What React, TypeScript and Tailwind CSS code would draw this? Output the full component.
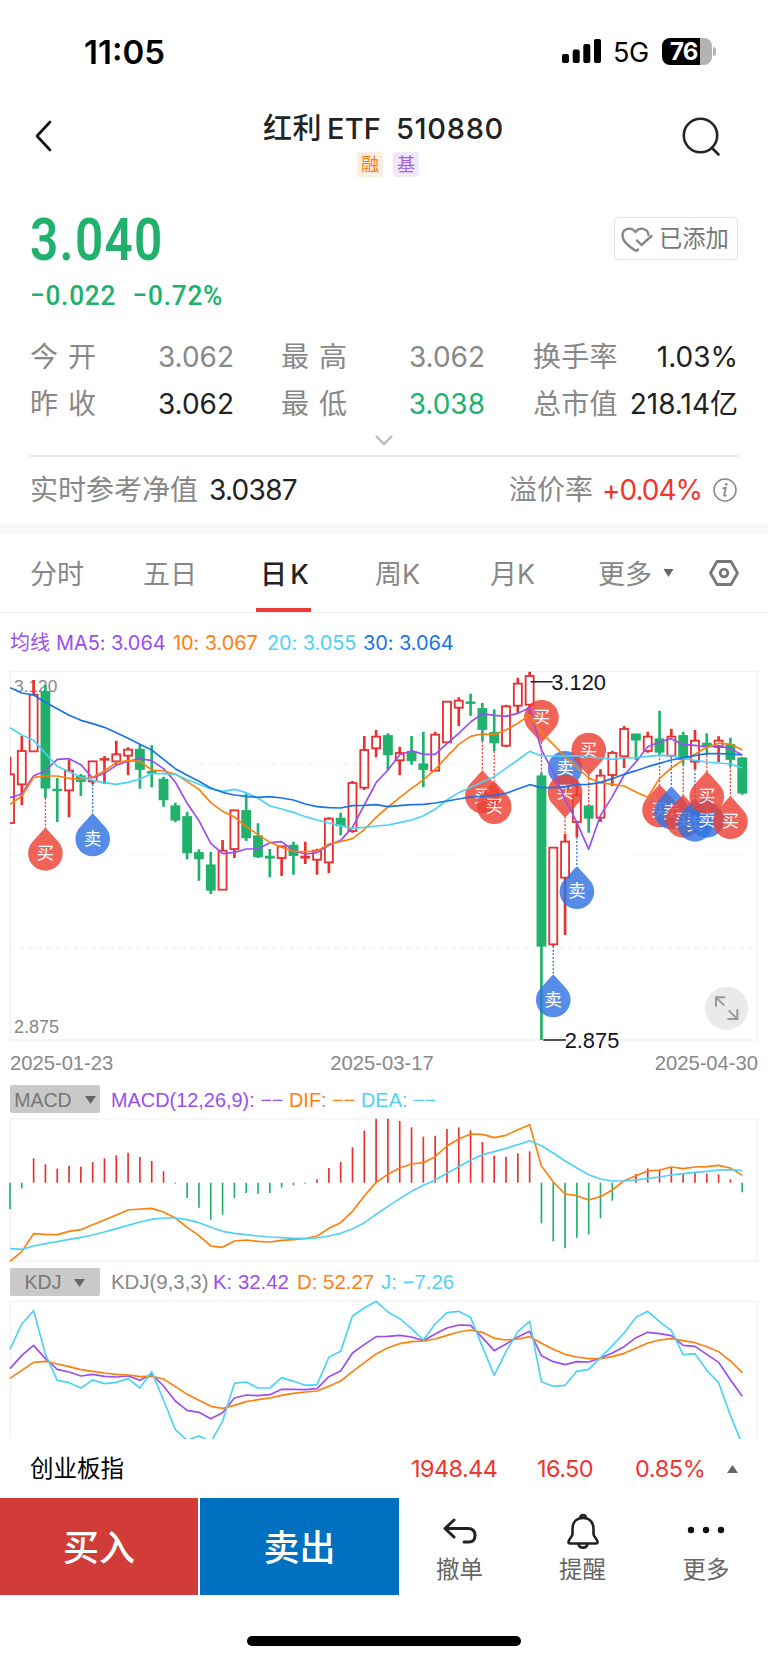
import React from "react";

type Candle = [dir: "r" | "g", high: number, top: number, bottom: number, low: number];
type Marker = { i: number; cy: number; kind: "buy" | "sell"; tip: "up" | "down"; from?: number };

const UP = "#e93030";
const DOWN = "#20b26c";
const PURPLE = "#9b4df0";
const ORANGE = "#ff7f0e";
const CYAN = "#4dd2f7";
const BLUE = "#1a73e8";

const START = 30;
const STEP = 35.43;
const xAt = (i: number) => START + STEP * i;

const candles: Candle[] = [
  ["r", 290, 342, 490, 490], ["r", 228, 272, 374, 436], ["r", 60, 103, 275, 275], ["g", 75, 95, 384, 414],
  ["g", 354, 388, 392, 486], ["r", 300, 331, 392, 472], ["g", 342, 348, 364, 408], ["r", 303, 303, 365, 372],
  ["r", 288, 296, 300, 372], ["r", 242, 282, 305, 315], ["r", 262, 268, 288, 346], ["g", 255, 268, 328, 386],
  ["g", 256, 335, 339, 382], ["g", 350, 358, 419, 440], ["g", 428, 438, 480, 486], ["g", 455, 470, 578, 598],
  ["g", 568, 578, 596, 662], ["g", 576, 615, 690, 702], ["r", 540, 571, 690, 690], ["r", 450, 450, 568, 594],
  ["g", 400, 452, 533, 543], ["g", 490, 528, 590, 594], ["g", 567, 589, 594, 652], ["r", 558, 558, 595, 648],
  ["g", 545, 556, 586, 644], ["r", 545, 589, 594, 612], ["r", 566, 571, 600, 644], ["r", 472, 475, 608, 640],
  ["g", 458, 475, 497, 526], ["r", 363, 368, 514, 518], ["r", 228, 269, 384, 390], ["r", 210, 229, 266, 292],
  ["g", 220, 227, 284, 330], ["r", 260, 278, 302, 346], ["g", 228, 276, 302, 314], ["g", 215, 312, 328, 382],
  ["r", 215, 223, 333, 333], ["r", 124, 124, 248, 248], ["r", 112, 121, 144, 198], ["g", 101, 126, 130, 167],
  ["g", 129, 146, 208, 243], ["g", 148, 218, 248, 273], ["r", 134, 138, 258, 262], ["r", 53, 70, 138, 160],
  ["r", 35, 47, 135, 175], ["g", 338, 348, 858, 1140], ["r", 562, 562, 854, 858], ["r", 522, 544, 654, 825],
  ["r", 360, 405, 487, 532], ["g", 438, 438, 474, 518], ["r", 328, 346, 474, 486], ["r", 272, 278, 346, 378],
  ["r", 198, 206, 290, 324], ["g", 222, 222, 240, 300], ["r", 215, 229, 274, 278], ["g", 152, 237, 276, 284],
  ["r", 206, 229, 288, 292], ["g", 215, 227, 298, 314], ["r", 210, 241, 306, 328], ["g", 220, 250, 256, 286],
  ["r", 229, 241, 262, 306], ["g", 233, 254, 298, 320], ["g", 292, 294, 399, 404],
];

const ma5 = [413, 402, 347, 333, 298, 296, 314, 354, 340, 316, 304, 296, 302, 326, 366, 430, 482, 550, 581, 577, 567, 567, 548, 545, 572, 582, 578, 556, 541, 502, 435, 368, 330, 284, 272, 283, 283, 251, 220, 186, 161, 166, 169, 160, 143, 270, 335, 418, 487, 568, 466, 410, 345, 306, 260, 246, 236, 254, 256, 261, 257, 266, 285];
const ma10 = [433, 408, 352, 348, 348, 355, 358, 352, 333, 308, 302, 304, 330, 333, 342, 365, 388, 428, 454, 471, 500, 524, 547, 562, 574, 575, 573, 552, 545, 536, 509, 472, 441, 413, 385, 360, 328, 290, 253, 229, 222, 224, 210, 190, 165, 218, 253, 290, 322, 354, 368, 373, 378, 396, 412, 355, 324, 300, 283, 262, 250, 252, 270];
const ma20 = [203, 225, 241, 280, 319, 335, 351, 361, 368, 373, 367, 357, 341, 341, 343, 359, 373, 387, 394, 388, 398, 414, 438, 447, 457, 470, 480, 489, 497, 505, 502, 498, 495, 488, 480, 467, 448, 420, 398, 382, 366, 350, 325, 300, 274, 288, 288, 288, 287, 291, 294, 298, 294, 293, 289, 286, 287, 295, 301, 306, 309, 312, 324];
const ma30 = [83, 99, 105, 127, 146, 166, 181, 191, 202, 218, 235, 253, 270, 298, 326, 346, 364, 384, 397, 405, 409, 412, 410, 414, 420, 432, 440, 443, 444, 437, 436, 434, 440, 437, 434, 433, 429, 423, 417, 411, 410, 406, 400, 387, 374, 383, 383, 380, 374, 373, 367, 356, 343, 332, 320, 310, 300, 293, 287, 281, 281, 282, 285];

const markers: Marker[] = [
  { i: 3, cy: 580, kind: "buy", tip: "up", from: 414 },
  { i: 7, cy: 537, kind: "sell", tip: "up", from: 372 },
  { i: 40, cy: 408, kind: "buy", tip: "up", from: 243 },
  { i: 41, cy: 440, kind: "buy", tip: "up", from: 273 },
  { i: 45, cy: 172, kind: "buy", tip: "down", from: 338 },
  { i: 46, cy: 1020, kind: "sell", tip: "up", from: 858 },
  { i: 47, cy: 325, kind: "sell", tip: "down" },
  { i: 47, cy: 396, kind: "buy", tip: "down", from: 522 },
  { i: 48, cy: 695, kind: "sell", tip: "up", from: 532 },
  { i: 49, cy: 270, kind: "buy", tip: "down", from: 438 },
  { i: 55, cy: 450, kind: "buy", tip: "up", from: 284 },
  { i: 56, cy: 456, kind: "sell", tip: "up", from: 292 },
  { i: 57, cy: 481, kind: "buy", tip: "up", from: 314 },
  { i: 58, cy: 493, kind: "sell", tip: "up", from: 328 },
  { i: 59, cy: 481, kind: "sell", tip: "up" },
  { i: 59, cy: 410, kind: "buy", tip: "up", from: 286 },
  { i: 61, cy: 485, kind: "buy", tip: "up", from: 320 },
];

const MACD_ZERO = 428;
const macdBars = [508, 445, 355, 373, 386, 377, 380, 366, 355, 346, 338, 351, 363, 394, 431, 474, 503, 539, 524, 474, 459, 461, 459, 443, 436, 431, 418, 384, 366, 322, 272, 236, 236, 243, 262, 290, 287, 267, 262, 271, 306, 347, 350, 340, 334, 550, 604, 625, 593, 583, 535, 482, 428, 402, 385, 390, 383, 402, 397, 401, 403, 418, 457];
const dif = [664, 635, 581, 583, 584, 574, 569, 554, 540, 525, 510, 507, 505, 516, 534, 562, 587, 618, 622, 603, 600, 604, 606, 601, 599, 596, 588, 565, 548, 514, 468, 427, 403, 384, 372, 368, 350, 318, 297, 282, 283, 293, 286, 269, 254, 378, 426, 462, 467, 480, 470, 450, 422, 407, 393, 390, 381, 386, 381, 380, 376, 384, 406];
const dea = [626, 628, 618, 611, 605, 598, 592, 585, 576, 566, 556, 546, 538, 534, 534, 539, 548, 562, 574, 580, 584, 588, 591, 593, 595, 595, 594, 588, 580, 567, 548, 523, 499, 476, 454, 436, 420, 400, 380, 360, 344, 335, 325, 314, 302, 317, 339, 363, 384, 404, 417, 423, 423, 420, 415, 411, 405, 401, 397, 394, 390, 389, 392];

const kLine = [326, 286, 256, 296, 328, 336, 348, 343, 349, 351, 348, 361, 343, 378, 423, 451, 457, 476, 458, 414, 405, 407, 404, 388, 388, 389, 386, 350, 333, 279, 254, 230, 229, 226, 231, 242, 222, 204, 195, 196, 233, 272, 252, 231, 214, 287, 305, 314, 305, 306, 294, 279, 260, 233, 217, 221, 227, 256, 259, 283, 307, 359, 409];
const dLine = [355, 331, 307, 304, 312, 320, 329, 334, 339, 343, 345, 350, 349, 357, 380, 403, 421, 439, 445, 436, 425, 419, 414, 406, 400, 396, 393, 379, 363, 335, 308, 282, 263, 251, 245, 243, 237, 226, 216, 210, 217, 235, 240, 237, 230, 250, 268, 283, 291, 296, 296, 290, 280, 265, 249, 240, 236, 242, 248, 260, 275, 303, 338];
const jLine = [268, 192, 152, 283, 361, 368, 384, 360, 371, 367, 356, 384, 335, 420, 509, 541, 528, 546, 484, 370, 366, 384, 384, 353, 364, 376, 374, 292, 274, 168, 144, 124, 156, 176, 206, 240, 192, 158, 154, 172, 260, 346, 275, 215, 184, 365, 379, 376, 334, 328, 293, 257, 219, 172, 154, 185, 212, 284, 281, 331, 368, 466, 553];

function Line({ data, color }: { data: number[]; color: string }) {
  return (
    <polyline
      points={data.map((y, i) => `${xAt(i).toFixed(1)},${y}`).join(" ")}
      fill="none"
      stroke={color}
      strokeWidth={5}
      strokeLinejoin="round"
    />
  );
}

function CandleShape({ c, i }: { c: Candle; i: number }) {
  const [dir, high, top, bottom, low] = c;
  const x = xAt(i);
  const color = dir === "r" ? UP : DOWN;
  return (
    <g stroke={color} fill={dir === "r" ? "none" : color}>
      <path d={`M${x} ${high}V${top}M${x} ${bottom}V${low}`} strokeWidth={8} />
      <rect x={x - 12} y={top + 1} width={24} height={Math.max(bottom - top - 2, 2)} strokeWidth={5.5} />
    </g>
  );
}

function MarkerLead({ m }: { m: Marker }) {
  if (m.from === undefined) return null;
  const x = xAt(m.i);
  const y = m.tip === "up" ? m.cy - 74 : m.cy + 74;
  return (
    <path
      d={`M${x} ${Math.min(y, m.from)}V${Math.max(y, m.from)}`}
      stroke={m.kind === "buy" ? "#ed4134" : "#3274e2"}
      strokeWidth={4}
      strokeDasharray="6 5"
    />
  );
}

function MarkerDrop({ m }: { m: Marker }) {
  return (
    <g transform={`translate(${xAt(m.i)} ${m.cy})`} opacity={0.82}>
      <path
        transform={m.tip === "down" ? "rotate(180)" : undefined}
        d="M-36.8 -36.8L-5 -72Q0 -78 5 -72L36.8 -36.8A52 52 0 1 1 -36.8 -36.8Z"
        fill={m.kind === "buy" ? "#ed4134" : "#3274e2"}
      />
      <text y={17} textAnchor="middle" fontSize={52} fill="#fff">
        {m.kind === "buy" ? "买" : "卖"}
      </text>
    </g>
  );
}

function KChart() {
  return (
    <svg
      viewBox="0 0 2304 1164"
      className="block h-[388px] w-[768px] shrink-0 overflow-visible font-['Liberation_Sans','Noto_Sans_CJK_SC',sans-serif]"
    >
      <defs>
        <clipPath id="plot">
          <rect x={30} y={0} width={2243} height={1144} />
        </clipPath>
      </defs>
      <rect x={31} y={35} width={2241} height={1105} fill="none" stroke="#f2f2f2" strokeWidth={4} />
      {[311, 587, 864].map((y) => (
        <path key={y} d={`M31 ${y}H2271`} stroke="#f4f4f4" strokeWidth={4} strokeDasharray="14 13" />
      ))}
      <text x={42} y={97} fontSize={52} fill="#888">3.120</text>
      <text x={42} y={1118} fontSize={54} fill="#888">2.875</text>
      <g clipPath="url(#plot)">
        {candles.map((c, i) => (
          <CandleShape key={i} c={c} i={i} />
        ))}
        {markers.map((m, i) => (
          <MarkerLead key={i} m={m} />
        ))}
        {markers.map((m, i) => (
          <MarkerDrop key={i} m={m} />
        ))}
        <Line data={ma5} color={PURPLE} />
        <Line data={ma10} color={ORANGE} />
        <Line data={ma20} color={CYAN} />
        <Line data={ma30} color={BLUE} />
      </g>
      <path d="M1592 65H1658M1630 1140H1698" stroke="#1a1a2e" strokeWidth={4.5} />
      <text x={1654} y={90} fontSize={65.5} fill="#14141f">3.120</text>
      <text x={1694} y={1164} fontSize={65.5} fill="#14141f">2.875</text>
      <circle cx={2180} cy={1045} r={65} fill="#eaeaea" />
      <path
        d="M2176 1012H2148V1040M2149 1013L2173 1037M2182 1077H2212V1048M2211 1076L2186 1051"
        fill="none"
        stroke="#999"
        strokeWidth={6}
      />
    </svg>
  );
}

function MacdChart() {
  return (
    <svg viewBox="0 234 2304 432" className="block h-[144px] w-[768px] shrink-0">
      <rect x={31} y={236} width={2241} height={428} fill="none" stroke="#f2f2f2" strokeWidth={4} />
      {macdBars.map((y, i) => (
        <path key={i} d={`M${xAt(i)} ${MACD_ZERO}V${y}`} stroke={y < MACD_ZERO ? UP : DOWN} strokeWidth={5} />
      ))}
      <Line data={dif} color={ORANGE} />
      <Line data={dea} color={CYAN} />
    </svg>
  );
}

function KdjChart() {
  return (
    <svg viewBox="0 120 2304 417" className="block h-[139px] w-[768px] shrink-0">
      <path d="M31 540V124H2272V540" fill="none" stroke="#f2f2f2" strokeWidth={4} />
      <Line data={kLine} color={PURPLE} />
      <Line data={dLine} color={ORANGE} />
      <Line data={jLine} color={CYAN} />
    </svg>
  );
}

function StatusBar() {
  return (
    <div className="flex h-[102px] shrink-0 items-center pr-[52px] pl-[84px] text-black">
      <span className="flex-1 pt-[2px] text-[33px] leading-none font-semibold">11:05</span>
      <svg viewBox="0 0 39 24" className="h-6 w-[39px]">
        <rect x="0" y="15" width="7" height="9" rx="2" />
        <rect x="10.7" y="10.5" width="7" height="13.5" rx="2" />
        <rect x="21.3" y="5" width="7" height="19" rx="2" />
        <rect x="32" y="0" width="7" height="24" rx="2" />
      </svg>
      <span className="ml-[12px] w-[38px] pt-[3px] text-[27px] leading-none tracking-[-0.5px]">5G</span>
      <div className="ml-[11px] flex h-[27px] w-[50px] items-center rounded-[8px] bg-linear-to-r from-black from-76% to-[#b3b3b3] to-76% pl-[8px]">
        <span className="text-[24px] leading-[27px] font-bold tracking-[-0.8px] text-white">76</span>
      </div>
      <div className="ml-[1px] h-[9px] w-[3px] rounded-r-full bg-[#b3b3b3]" />
    </div>
  );
}

function Header() {
  return (
    <header className="flex h-[88px] shrink-0 items-start justify-between px-[35px]">
      <svg viewBox="0 0 17 32" className="mt-[18px] h-8 w-[17px]" fill="none" stroke="#111" strokeWidth="2.6" strokeLinecap="round" strokeLinejoin="round">
        <path d="M15 2L2 16L15 30" />
      </svg>
      <div className="mt-[9px] flex flex-col items-center pl-[34px]">
        <h1 className="flex text-[29px] leading-[36px] font-medium whitespace-nowrap text-[#222]">
          <span className="w-[64px] tracking-[0.5px]">红利</span>
          <span className="w-[69px] tracking-[0.2px]">ETF</span>
          <span className="tracking-[0.7px]">510880</span>
        </h1>
        <div className="mt-[5px] mr-[-9px] flex gap-[10px] text-[18px] leading-[25px]">
          <span className="w-[26px] rounded-[3px] bg-[#fbeee1] text-center text-[#f08020]">融</span>
          <span className="w-[26px] rounded-[3px] bg-[#f1e9f9] text-center text-[#a562e0]">基</span>
        </div>
      </div>
      <svg viewBox="0 0 40 40" className="mt-[15px] mr-[12px] h-10 w-10" fill="none" stroke="#22252e" strokeWidth="2.6" strokeLinecap="round">
        <circle cx="19.5" cy="18.5" r="16.7" />
        <path d="M31 31L37.5 37.5" />
      </svg>
    </header>
  );
}

const stats = [
  ["今 开", "3.062", "text-[#888]", "最 高", "3.062", "text-[#888]", "换手率", "1.03%"],
  ["昨 收", "3.062", "text-[#222]", "最 低", "3.038", "text-[#20b26c]", "总市值", "218.14亿"],
];

function Quote() {
  return (
    <section className="flex h-[334px] shrink-0 flex-col px-[30px]">
      <div className="flex items-start justify-between pt-[27px]">
        <div className="h-[43px] origin-left scale-x-[0.84] font-['Roboto',sans-serif] text-[59px] leading-[45px] font-semibold tracking-[1.5px] whitespace-nowrap text-[#20b26c]">
          3.040
        </div>
        <button className="flex h-[43px] w-[124px] items-center rounded-[4px] border border-[#e6e6e6] pt-[1px] pl-[6px] text-[23.3px] whitespace-nowrap text-[#777]">
          <svg viewBox="0 0 32 25" className="mr-[6px] h-[25px] w-8 shrink-0" fill="none" stroke="#888" strokeWidth="2.4" strokeLinecap="round" strokeLinejoin="round">
            <path d="M17 22.5Q15.500 24.500 13.500 23C6 18 1.500 14 1.500 8.500C1.500 1 10.500 -0.500 14.500 5C18.500 -0.500 27 1 27.500 8" />
            <path d="M16 13.500L20.500 18L30.500 9" />
          </svg>
          已添加
        </button>
      </div>
      <div className="mt-[18px] flex h-[36px] origin-left scale-x-[0.92] gap-[18px] font-['Roboto',sans-serif] text-[28.5px] leading-[36px] font-medium tracking-[0.8px] text-[#20b26c]">
        <span>−0.022</span>
        <span>−0.72%</span>
      </div>
      <div className="mt-[20px] flex flex-col text-[28px] leading-[47px] whitespace-nowrap">
        {stats.map((row) => (
          <div key={row[0]} className="flex h-[47px] text-[#888]">
            <span className="w-[90px] [word-spacing:2px]">{row[0]}</span>
            <span className={`w-[114px] text-right ${row[2]}`}>{row[1]}</span>
            <span className="ml-[47px] w-[90px] [word-spacing:2px]">{row[3]}</span>
            <span className={`w-[114px] text-right ${row[5]}`}>{row[4]}</span>
            <span className="ml-[48px] tracking-[0.3px]">{row[6]}</span>
            <span className="flex-1 text-right text-[#222]">{row[7]}</span>
          </div>
        ))}
      </div>
      <svg viewBox="0 0 18 11" className="mt-[7px] h-[11px] w-[18px] self-center" fill="none" stroke="#bbb" strokeWidth="2.4">
        <path d="M1 1L9 9L17 1" />
      </svg>
      <div className="mt-[9px] h-[2px] bg-[#e8e8e8]" />
      <div className="flex h-[66px] items-center text-[28px] whitespace-nowrap text-[#888]">
        <span className="w-[179px]">实时参考净值</span>
        <span className="tracking-[-0.7px] text-[#222]">3.0387</span>
        <span className="ml-auto w-[93px]">溢价率</span>
        <span className="w-[105px] tracking-[-1px] text-[#f0352f]">+0.04%</span>
        <svg viewBox="0 0 24 24" className="ml-[6px] mr-[1px] h-6 w-6" fill="none" stroke="#888" strokeWidth="1.500">
          <circle cx="12" cy="12" r="11" />
          <path d="M9.500 10.300L12.800 9.800L11.200 17.200Q11.200 18.400 13.500 17.300" strokeWidth="1.700" />
          <circle cx="13.300" cy="6.300" r="1.300" fill="#888" stroke="none" />
        </svg>
      </div>
    </section>
  );
}

const tabs = [
  { label: "分时", width: "w-[113px]" },
  { label: "五日", width: "w-[113px]" },
  { label: "日 K", width: "w-[119px]", active: true },
  { label: "周K", width: "w-[115px]" },
  { label: "月K", width: "w-[108px]" },
  { label: "更多", width: "w-[66px]" },
];

function Tabs() {
  return (
    <nav className="flex h-[79px] shrink-0 border-b border-[#eee] pl-[30px] text-[27px] leading-[81px] whitespace-nowrap text-[#888]">
      {tabs.map((t) =>
        t.active ? (
          <div key={t.label} className={`flex ${t.width}`}>
            <div className="flex h-[78px] w-[55px] flex-col items-center">
              <span className="h-[74px] pl-[2px] font-medium text-[#222] [word-spacing:-4px]">{t.label}</span>
              <span className="h-[4px] w-full bg-[#ee3a36]" />
            </div>
          </div>
        ) : (
          <span key={t.label} className={t.width}>
            {t.label}
          </span>
        )
      )}
      <svg viewBox="0 0 10 8" className="mt-[35px] ml-[-1px] h-2 w-[11px]" fill="#666">
        <path d="M0 0H10L5 8Z" />
      </svg>
      <svg viewBox="0 0 30 26" className="mt-[26px] ml-[35px] h-[26px] w-[30px]" fill="none" stroke="#777" strokeWidth="2.800" strokeLinejoin="round">
        <path d="M8 1.500H22L28.500 13L22 24.500H8L1.500 13Z" />
        <circle cx="15" cy="13" r="3.800" />
      </svg>
    </nav>
  );
}

function IndicatorButton({ name }: { name: string }) {
  return (
    <button className="mr-[11px] flex h-[28px] w-[90px] items-center justify-center gap-[13px] rounded-[2px] bg-[#c9c9c9] pt-[1px] font-['Liberation_Sans',sans-serif] text-[19.5px] text-[#777]">
      {name}
      <svg viewBox="0 0 11 8" className="h-2 w-[11px] shrink-0" fill="#666">
        <path d="M0 0H11L5.500 8Z" />
      </svg>
    </button>
  );
}

function BottomBar() {
  return (
    <footer className="flex h-[97px] shrink-0 text-[23.5px] text-[#666]">
      <button className="flex w-[198px] items-center justify-center bg-[#d23c38] pt-[2px] text-[36px] font-medium text-white">买入</button>
      <button className="ml-[2px] flex w-[199px] items-center justify-center bg-[#0070c0] pt-[2px] text-[36px] font-medium text-white">卖出</button>
      <div className="flex w-[121px] flex-col items-center">
        <svg viewBox="0 0 34 26" className="mt-[20px] h-[26px] w-[34px]" fill="none" stroke="#222" strokeWidth="3" strokeLinecap="round" strokeLinejoin="round">
          <path d="M11 2L2 10.500L11 19" />
          <path d="M3 10.500H25Q32 10.500 32 17.500T25 24H21" />
        </svg>
        <span className="mt-[9px] leading-[34px]">撤单</span>
      </div>
      <div className="flex w-[125px] flex-col items-center">
        <svg viewBox="0 0 34 36" className="mt-[15px] h-[36px] w-[34px]" fill="none" stroke="#222" strokeWidth="2.600" strokeLinejoin="round">
          <path d="M17 5C9 5 6.500 11 6.500 16V21C6.500 24 2.500 26 2.500 29Q2.500 30.500 4 30.500H30Q31.500 30.500 31.500 29C31.500 26 27.500 24 27.500 21V16C27.500 11 25 5 17 5Z" />
          <path d="M14 5.500C14 1 20 1 20 5.500M12.500 31C13 35.800 21 35.800 21.500 31" />
        </svg>
        <span className="mt-[4px] leading-[34px]">提醒</span>
      </div>
      <div className="flex w-[122px] flex-col items-center">
        <svg viewBox="0 0 38 8" className="mt-[28px] h-2 w-[38px]" fill="#111">
          <circle cx="4" cy="4" r="3.200" />
          <circle cx="19" cy="4" r="3.200" />
          <circle cx="34" cy="4" r="3.200" />
        </svg>
        <span className="mt-[19px] leading-[34px]">更多</span>
      </div>
    </footer>
  );
}

export default function App() {
  return (
    <div className="flex h-[1663px] w-[768px] flex-col overflow-hidden bg-white font-['Inter','Noto_Sans_CJK_SC',sans-serif]">
      <StatusBar />
      <Header />
      <Quote />
      <div className="h-[10px] shrink-0 bg-[#f8f8f8]" />
      <Tabs />
      <div className="flex h-[47px] shrink-0 items-end pl-[10px] text-[20px] leading-[34px] tracking-[-0.1px] whitespace-nowrap">
        <span className="w-[46px] text-[#9b4df0]">均线</span>
        <span className="w-[117px] text-[#9b4df0]">MA5: 3.064</span>
        <span className="w-[94px] text-[#ff7f0e]">10: 3.067</span>
        <span className="w-[96px] text-[#4dd2f7]">20: 3.055</span>
        <span className="text-[#1a73e8]">30: 3.064</span>
      </div>
      <KChart />
      <div className="flex h-[37px] shrink-0 items-start justify-between px-[10px] pt-[5px] font-['Liberation_Sans',sans-serif] text-[20.2px] leading-none text-[#888]">
        <span>2025-01-23</span>
        <span className="mr-[4px]">2025-03-17</span>
        <span>2025-04-30</span>
      </div>
      <div className="flex h-[33px] shrink-0 items-start pl-[10px] font-['Liberation_Sans',sans-serif] text-[19.9px] leading-[30px] whitespace-nowrap">
        <IndicatorButton name="MACD" />
        <span className="w-[178px] text-[#9b4df0]">MACD(12,26,9): −−</span>
        <span className="w-[72px] text-[#ff7f0e]">DIF: −−</span>
        <span className="text-[#4dd2f7]">DEA: −−</span>
      </div>
      <MacdChart />
      <div className="flex h-[38px] shrink-0 items-start pt-[6px] pl-[10px] font-['Liberation_Sans',sans-serif] text-[20.4px] leading-[29px] whitespace-nowrap">
        <IndicatorButton name="KDJ" />
        <span className="w-[102px] text-[#888]">KDJ(9,3,3)</span>
        <span className="w-[84px] text-[#9b4df0]">K: 32.42</span>
        <span className="w-[84px] text-[#ff7f0e]">D: 52.27</span>
        <span className="text-[#4dd2f7]">J: −7.26</span>
      </div>
      <KdjChart />
      <div className="flex h-[59px] shrink-0 items-center pl-[30px] text-[23.5px] whitespace-nowrap text-[#f0352f]">
        <span className="w-[381px] text-black">创业板指</span>
        <span className="w-[126px] tracking-[-0.6px]">1948.44</span>
        <span className="w-[98px] tracking-[-0.6px]">16.50</span>
        <span className="w-[92px] tracking-[-0.4px]">0.85%</span>
        <svg viewBox="0 0 11 8" className="h-2 w-[11px]" fill="#666">
          <path d="M0 8H11L5.500 0Z" />
        </svg>
      </div>
      <BottomBar />
      <div className="mt-[41px] ml-[247px] h-[10px] w-[274px] shrink-0 rounded-full bg-black" />
    </div>
  );
}
